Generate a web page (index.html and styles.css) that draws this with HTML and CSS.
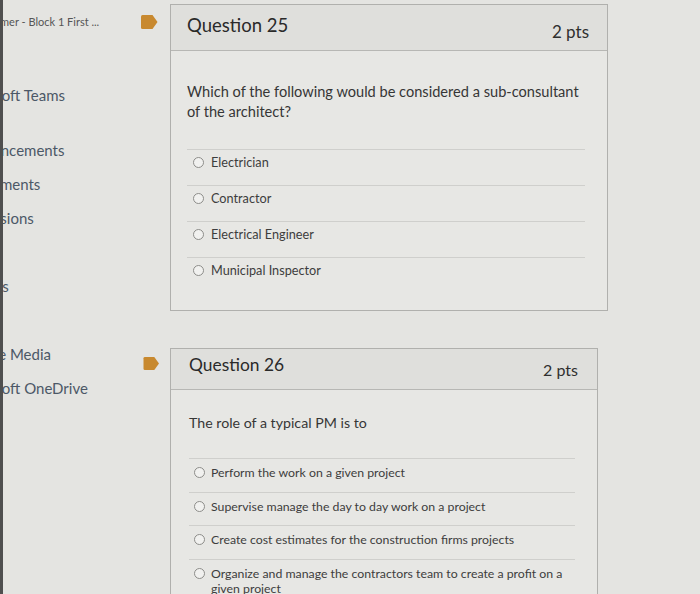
FILE: index.html
```html
<!DOCTYPE html>
<html lang="en">
<head>
<meta charset="utf-8">
<title>Quiz</title>
<link rel="stylesheet" href="styles.css">
</head>
<body>
<div class="page">
  <aside class="sidebar">
    <div class="crumb">Summer - Block 1 First ...</div>
    <ul class="nav nav-top">
      <li>Microsoft Teams</li>
    </ul>
    <ul class="nav">
      <li>Announcements</li>
      <li>Assignments</li>
      <li>Discussions</li>
      <li>Pages</li>
      <li>Quizzes</li>
      <li>Files</li>
      <li>Lecture Media</li>
      <li>Microsoft OneDrive</li>
    </ul>
  </aside>

  <main class="quiz">
    <section class="question q-first">
      <div class="flag-col">
        <svg class="flag" viewBox="0 0 18 16" width="18" height="16"><path d="M1 2.5Q1 1 2.5 1H12.5L17.5 8L12.5 15H2.5Q1 15 1 13.5Z" fill="#c8892f"/></svg>
      </div>
      <div class="card">
        <header class="card-head">
          <h2 class="card-title">Question 25</h2>
          <span class="pts">2 pts</span>
        </header>
        <div class="card-body">
          <p class="q-text">Which of the following would be considered a sub-consultant of the architect?</p>
          <ul class="answers">
            <li class="answer"><span class="radio"></span><span class="label">Electrician</span></li>
            <li class="answer"><span class="radio"></span><span class="label">Contractor</span></li>
            <li class="answer"><span class="radio"></span><span class="label">Electrical Engineer</span></li>
            <li class="answer"><span class="radio"></span><span class="label">Municipal Inspector</span></li>
          </ul>
        </div>
      </div>
    </section>

    <section class="question q-second">
      <div class="flag-col">
        <svg class="flag" viewBox="0 0 18 16" width="18" height="15"><path d="M1 2.5Q1 1 2.5 1H12.5L17.5 8L12.5 15H2.5Q1 15 1 13.5Z" fill="#c8892f"/></svg>
      </div>
      <div class="card">
        <header class="card-head">
          <h2 class="card-title">Question 26</h2>
          <span class="pts">2 pts</span>
        </header>
        <div class="card-body">
          <p class="q-text">The role of a typical PM is to</p>
          <ul class="answers">
            <li class="answer"><span class="radio"></span><span class="label">Perform the work on a given project</span></li>
            <li class="answer"><span class="radio"></span><span class="label">Supervise manage the day to day work on a project</span></li>
            <li class="answer"><span class="radio"></span><span class="label">Create cost estimates for the construction firms projects</span></li>
            <li class="answer"><span class="radio"></span><span class="label">Organize and manage the contractors team to create a profit on a given project</span></li>
          </ul>
        </div>
      </div>
    </section>
  </main>
</div>
</body>
</html>
```

FILE: styles.css
```css
* { box-sizing: border-box; }

html, body {
  margin: 0;
  padding: 0;
  height: 100%;
  overflow: hidden;
}

body {
  background: #e4e4e1;
  font-family: "Lato", "Open Sans", "Liberation Sans", sans-serif;
  color: #333;
}

.page {
  display: flex;
  align-items: flex-start;
  height: 594px;
}

/* ---------- sidebar ---------- */
.sidebar {
  width: 140px;
  flex: none;
  height: 100%;
  overflow: hidden;
  border-left: 3px solid #4f4f4f;
  padding-top: 15px;
}

.crumb {
  margin-left: -24px;
  font-size: 11px;
  line-height: 14px;
  color: #555;
  white-space: nowrap;
}

.nav {
  list-style: none;
  margin: 21px 0 0 -46px;
  padding: 0;
  white-space: nowrap;
}

.nav-top {
  margin-top: 49px;
}

.nav li {
  font-size: 15px;
  line-height: 34px;
  height: 34px;
  color: #4c5867;
}

/* ---------- quiz column ---------- */
.quiz {
  flex: none;
  padding-top: 4px;
}

.question {
  display: flex;
  align-items: flex-start;
}

.q-second { margin-top: 37px; }

.flag-col {
  width: 30px;
  flex: none;
}

.flag {
  display: block;
}

.q-first .flag { margin-top: 10px; }
.q-second .flag { margin-top: 8px; margin-left: 2px; }

.card {
  border: 1px solid #b0b0ad;
  background: #e7e7e4;
}

.q-first .card { width: 438px; }
.q-second .card { width: 428px; }

.card-head {
  display: flex;
  justify-content: space-between;
  align-items: flex-start;
  background: #dfdfdc;
  border-bottom: 1px solid #b7b7b4;
}

.q-first .card-head { height: 46px; padding: 9px 18px 0 16px; }
.q-second .card-head { height: 41px; padding: 5px 19px 0 18px; }

.card-title {
  margin: 0;
  font-weight: 400;
  color: #2a2a2a;
}

.q-first .card-title { font-size: 18.5px; line-height: 22px; }
.q-second .card-title { font-size: 17.4px; line-height: 22px; }

.pts {
  line-height: 20px;
  color: #2f2f2f;
}

.q-first .pts { font-size: 17px; margin-top: 8px; }
.q-second .pts { font-size: 16px; margin-top: 6px; }

.q-first .card-body { padding: 31px 14px 17px 16px; }
.q-second .card-body { padding: 23px 22px 0 18px; }

.q-text {
  margin: 0;
  line-height: 20px;
  color: #363636;
}

.q-first .q-text { font-size: 14.6px; margin-bottom: 27px; }
.q-second .q-text { font-size: 14.2px; margin-bottom: 25px; }

.answers {
  list-style: none;
  margin: 0;
  padding: 0;
}

.q-first .answers { margin-right: 8px; }

.answer {
  display: flex;
  align-items: flex-start;
  border-top: 1px solid #cfcfcc;
  color: #3d3d3d;
}

.q-first .answer { font-size: 12.7px; padding: 4px 0 14px; line-height: 17px; }
.q-second .answer { font-size: 12.3px; padding: 6px 0 11.5px; line-height: 15px; }

.radio {
  flex: none;
  width: 11px;
  height: 11px;
  border: 1px solid #8d8d8a;
  border-radius: 50%;
  background: #f1f1ef;
  margin-left: 6px;
  margin-right: 7px;
}

.q-first .radio { margin-top: 3px; }
.q-second .radio { margin-top: 2px; margin-left: 5px; margin-right: 6px; }
```
